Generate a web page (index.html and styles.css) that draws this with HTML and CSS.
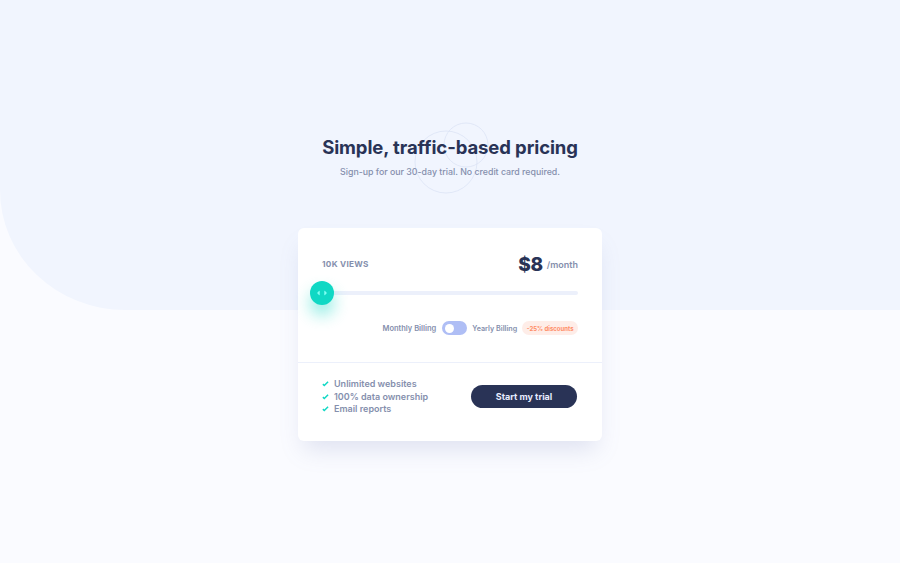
FILE: index.html
```html
<!DOCTYPE html>
<html lang="en">
<head>
<meta charset="utf-8">
<title>Interactive pricing component</title>
<link rel="stylesheet" href="styles.css">
</head>
<body>
<main class="page">
  <header class="intro">
    <svg class="circles" width="120" height="100" viewBox="0 0 120 100" aria-hidden="true">
      <circle cx="70" cy="34" r="22" fill="none" stroke="#DCE3F5" stroke-width="0.8"/>
      <circle cx="50" cy="51" r="31" fill="none" stroke="#DCE3F5" stroke-width="0.8"/>
    </svg>
    <h1 class="title">Simple, traffic-based pricing</h1>
    <p class="subtitle">Sign-up for our 30-day trial. No credit card required.</p>
  </header>

  <section class="card">
    <div class="card-top">
      <div class="summary">
        <span class="views">10K Views</span>
        <span class="price"><strong class="amount">$8</strong><span class="period">/month</span></span>
      </div>
      <div class="slider">
        <div class="track"></div>
        <div class="thumb">
          <svg width="10" height="6" viewBox="0 0 22 13" aria-hidden="true">
            <path d="M16 2.558v7.884a1 1 0 0 0 1.735.679l3.639-3.943a1 1 0 0 0 0-1.356l-3.64-3.943A1 1 0 0 0 16 2.558zm-10 0v7.884a1 1 0 0 1-1.735.679L.626 7.178a1 1 0 0 1 0-1.356l3.64-3.943A1 1 0 0 1 6 2.558z" fill="#80FFF3"/>
          </svg>
        </div>
      </div>
      <div class="billing">
        <span class="billing-label">Monthly Billing</span>
        <span class="toggle"><span class="knob"></span></span>
        <span class="billing-label yearly">Yearly Billing</span>
        <span class="badge">-25% discounts</span>
      </div>
    </div>
    <div class="card-bottom">
      <ul class="features">
        <li class="feature"><svg class="check" width="7" height="6" viewBox="0 0 9 8"><path d="M1 4.134l1.907 1.908L7.949 1" fill="none" stroke="#10D8C4" stroke-width="2"/></svg>Unlimited websites</li>
        <li class="feature"><svg class="check" width="7" height="6" viewBox="0 0 9 8"><path d="M1 4.134l1.907 1.908L7.949 1" fill="none" stroke="#10D8C4" stroke-width="2"/></svg>100% data ownership</li>
        <li class="feature"><svg class="check" width="7" height="6" viewBox="0 0 9 8"><path d="M1 4.134l1.907 1.908L7.949 1" fill="none" stroke="#10D8C4" stroke-width="2"/></svg>Email reports</li>
      </ul>
      <button class="cta" type="button">Start my trial</button>
    </div>
  </section>
</main>
</body>
</html>
```

FILE: styles.css
```css
* { box-sizing: border-box; }

html, body {
  margin: 0;
  padding: 0;
}

body {
  background: #FAFBFF;
  font-family: Inter, "Noto Sans", "Liberation Sans", sans-serif;
  color: #858FAD;
  min-height: 563px;
  overflow: hidden;
}

.page {
  position: relative;
  display: flex;
  flex-direction: column;
  align-items: center;
  padding-top: 135px;
  min-height: 563px;
}

.page::before {
  content: "";
  position: absolute;
  left: 0;
  top: 0;
  width: 100%;
  height: 310px;
  background: #F1F5FE;
  border-bottom-left-radius: 125px 120px;
  z-index: 0;
}

.intro {
  position: relative;
  z-index: 1;
  display: flex;
  flex-direction: column;
  align-items: center;
  text-align: center;
}

.circles {
  position: absolute;
  left: 50%;
  top: -24px;
  margin-left: -54px;
  z-index: -1;
}

.title {
  margin: 0;
  font-size: 18.5px;
  line-height: 24px;
  font-weight: 700;
  color: #293356;
  letter-spacing: -0.1px;
}

.subtitle {
  margin: 6px 0 0;
  font-size: 8.8px;
  line-height: 14px;
  font-weight: 500;
  color: #858FAD;
}

.card {
  position: relative;
  z-index: 1;
  margin-top: 49px;
  width: 304px;
  background: #FFFFFF;
  border-radius: 6px;
  box-shadow: 0 14px 22px -6px rgba(127, 137, 185, 0.22);
}

.card-top {
  padding: 24px 24px 26px;
  border-bottom: 1px solid #ECF0FB;
}

.summary {
  display: flex;
  justify-content: space-between;
  align-items: center;
  height: 24px;
}

.views {
  font-size: 8.2px;
  font-weight: 700;
  text-transform: uppercase;
  letter-spacing: 0.3px;
  color: #858FAD;
}

.price {
  display: flex;
  align-items: center;
  gap: 4px;
}

.amount {
  font-size: 19px;
  font-weight: 800;
  color: #293356;
  letter-spacing: -0.3px;
}

.period {
  font-size: 9px;
  font-weight: 600;
  color: #858FAD;
}

.slider {
  position: relative;
  margin-top: 5px;
  height: 24px;
  display: flex;
  align-items: center;
}

.track {
  width: 100%;
  height: 4px;
  border-radius: 2px;
  background: #ECF0FB;
}

.thumb {
  position: absolute;
  left: -12px;
  top: 0;
  width: 24px;
  height: 24px;
  border-radius: 50%;
  background: #10D8C4;
  display: flex;
  align-items: center;
  justify-content: center;
  box-shadow: 0 10px 16px rgba(16, 216, 196, 0.45);
}

.billing {
  margin-top: 15px;
  height: 16px;
  display: flex;
  justify-content: flex-end;
  align-items: center;
  gap: 6px;
}

.billing-label {
  font-size: 7.5px;
  font-weight: 600;
  color: #858FAD;
}

.billing-label.yearly {
  margin-left: -1px;
  font-size: 7.2px;
}

.toggle {
  width: 25px;
  height: 14px;
  border-radius: 7px;
  background: #AFBEF5;
  display: flex;
  align-items: center;
  padding-left: 3px;
}

.knob {
  width: 9px;
  height: 9px;
  border-radius: 50%;
  background: #FFFFFF;
}

.badge {
  margin-left: -1px;
  height: 14px;
  padding: 0 4.5px;
  border-radius: 7px;
  background: #FEEDE8;
  color: #FF8C66;
  font-size: 6px;
  font-weight: 700;
  display: flex;
  align-items: center;
}

.card-bottom {
  padding: 15px 25px 25px 24px;
  display: flex;
  justify-content: space-between;
  align-items: center;
}

.features {
  list-style: none;
  margin: 0;
  padding: 0;
}

.feature {
  display: flex;
  align-items: center;
  gap: 5px;
  font-size: 9px;
  line-height: 12.5px;
  font-weight: 600;
  color: #858FAD;
}

.check { flex: none; }

.cta {
  width: 106px;
  height: 23px;
  border: 0;
  border-radius: 12px;
  background: #293356;
  color: #E6ECFF;
  font-family: inherit;
  font-size: 9px;
  font-weight: 700;
  cursor: pointer;
}
```
